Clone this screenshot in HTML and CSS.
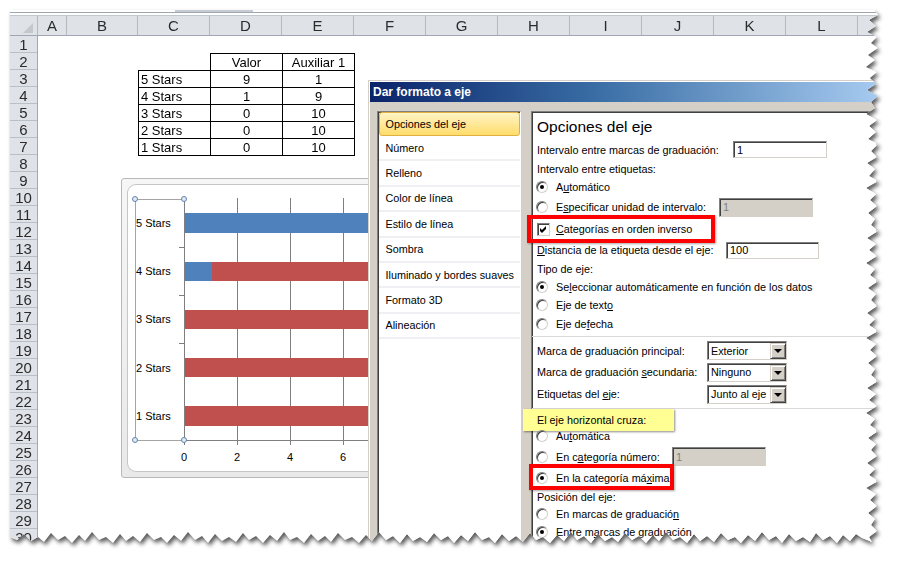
FILE: index.html
```html
<!DOCTYPE html>
<html lang="es">
<head>
<meta charset="utf-8">
<title>Dar formato a eje</title>
<link rel="stylesheet" href="styles.css">
</head>
<body>
<div class="shot-shadow">
  <div class="shot">
    <div class="fbar"><div class="fbar-tab"></div></div>
    <div class="colheads">
      <div class="corner"><span class="corner-tri"></span></div>
      <div class="ch ch-a">A</div>
      <div class="ch ch-b">B</div>
      <div class="ch">C</div>
      <div class="ch">D</div>
      <div class="ch">E</div>
      <div class="ch">F</div>
      <div class="ch">G</div>
      <div class="ch">H</div>
      <div class="ch">I</div>
      <div class="ch">J</div>
      <div class="ch">K</div>
      <div class="ch">L</div>
      <div class="ch ch-m"></div>
    </div>
    <div class="sheet">
      <div class="rowheads">
        <div class="rh">1</div><div class="rh">2</div><div class="rh">3</div><div class="rh">4</div><div class="rh">5</div>
        <div class="rh">6</div><div class="rh">7</div><div class="rh">8</div><div class="rh">9</div><div class="rh">10</div>
        <div class="rh">11</div><div class="rh">12</div><div class="rh">13</div><div class="rh">14</div><div class="rh">15</div>
        <div class="rh">16</div><div class="rh">17</div><div class="rh">18</div><div class="rh">19</div><div class="rh">20</div>
        <div class="rh">21</div><div class="rh">22</div><div class="rh">23</div><div class="rh">24</div><div class="rh">25</div>
        <div class="rh">26</div><div class="rh">27</div><div class="rh">28</div><div class="rh">29</div><div class="rh">30</div>
      </div>
      <div class="cells">
        <table class="data">
          <tr><td class="blank"></td><td>Valor</td><td>Auxiliar 1</td></tr>
          <tr><td class="lbl">5 Stars</td><td>9</td><td>1</td></tr>
          <tr><td class="lbl">4 Stars</td><td>1</td><td>9</td></tr>
          <tr><td class="lbl">3 Stars</td><td>0</td><td>10</td></tr>
          <tr><td class="lbl">2 Stars</td><td>0</td><td>10</td></tr>
          <tr><td class="lbl">1 Stars</td><td>0</td><td>10</td></tr>
        </table>
      </div>
    </div>

    <div class="chart">
      <div class="chart-area">
        <div class="plot">
          <div class="gridline g1"></div>
          <div class="gridline g2"></div>
          <div class="gridline g3"></div>
          <div class="xaxis"><span class="xtick t0"></span><span class="xtick t1"></span><span class="xtick t2"></span><span class="xtick t3"></span></div>
          <div class="yaxis"></div>
          <div class="selbox"></div>
          <div class="cat">
            <span class="cat-lbl">5 Stars</span>
            <div class="bar"><span class="seg blue" style="width:238.5px"></span></div>
          </div>
          <div class="cat">
            <span class="cat-lbl">4 Stars</span>
            <div class="bar"><span class="seg blue" style="width:26.5px"></span><span class="seg red" style="width:238.5px"></span></div>
          </div>
          <div class="cat">
            <span class="cat-lbl">3 Stars</span>
            <div class="bar"><span class="seg red" style="width:265px"></span></div>
          </div>
          <div class="cat">
            <span class="cat-lbl">2 Stars</span>
            <div class="bar"><span class="seg red" style="width:265px"></span></div>
          </div>
          <div class="cat">
            <span class="cat-lbl">1 Stars</span>
            <div class="bar"><span class="seg red" style="width:265px"></span></div>
          </div>
          <span class="handle h-tl"></span>
          <span class="handle h-tr"></span>
          <span class="handle h-bl"></span>
          <span class="handle h-br"></span>
        </div>
        <div class="xlabels">
          <span>0</span><span>2</span><span>4</span><span>6</span>
        </div>
      </div>
      <span class="grip grip-tl"></span>
      <span class="grip grip-ml"></span>
      <span class="grip grip-bl"></span>
      <span class="grip grip-tr"></span>
      <span class="grip grip-br"></span>
    </div>

    <div class="dialog">
      <div class="titlebar">Dar formato a eje</div>
      <div class="dlg-body">
        <div class="list">
          <div class="item sel">Opciones del eje</div>
          <div class="item">Número</div>
          <div class="item">Relleno</div>
          <div class="item">Color de línea</div>
          <div class="item">Estilo de línea</div>
          <div class="item">Sombra</div>
          <div class="item">Iluminado y bordes suaves</div>
          <div class="item">Formato 3D</div>
          <div class="item">Alineación</div>
        </div>
        <div class="panel">
          <div class="r r-title">Opciones del eje</div>
          <div class="r h21"><span class="lw196">Intervalo entre marcas de graduación:</span><span class="inp w94">1</span></div>
          <div class="r h18">Intervalo entre etiquetas:</div>
          <div class="r h18"><span class="rad on"></span>A<u>u</u>tomático</div>
          <div class="r h22"><span class="rad"></span><span class="lw163">E<u>s</u>pecificar unidad de intervalo:</span><span class="inp dis w94">1</span></div>
          <div class="r h22"><span class="chk"><svg width="11" height="11" viewBox="0 0 11 11"><polygon points="2,4 4,6 8,2 8,5 4,9 2,7" fill="#000"/></svg></span><u>C</u>ategorías en orden inverso</div>
          <div class="r h20"><span class="lw189"><u>D</u>istancia de la etiqueta desde el eje:</span><span class="inp w93">100</span></div>
          <div class="r h18">Tipo de eje:</div>
          <div class="r h18"><span class="rad on"></span>Se<u>l</u>eccionar automáticamente en función de los datos</div>
          <div class="r h18"><span class="rad"></span>Eje de text<u>o</u></div>
          <div class="r h19"><span class="rad"></span>Eje de <u>f</u>echa</div>
          <div class="sep"></div>
          <div class="r h21"><span class="lw170">Marca de <u>g</u>raduación principal:</span><span class="dd">Exterior<span class="dd-btn"></span></span></div>
          <div class="r h22"><span class="lw170">Marca de graduación <u>s</u>ecundaria:</span><span class="dd">Ninguno<span class="dd-btn"></span></span></div>
          <div class="r h22"><span class="lw170">Etiquetas del <u>e</u>je:</span><span class="dd">Junto al eje<span class="dd-btn"></span></span></div>
          <div class="sep sep2"></div>
          <div class="r h22"><span class="hl">El eje horizontal cruza:</span></div>
          <div class="r h15b"><span class="rad"></span>Au<u>t</u>omática</div>
          <div class="r h21"><span class="rad"></span><span class="lw116">En c<u>a</u>tegoría número:</span><span class="inp dis w94">1</span></div>
          <div class="r h21"><span class="rad on"></span>En la categoría má<u>x</u>ima</div>
          <div class="r h17">Posición del eje:</div>
          <div class="r h17"><span class="rad"></span>En marcas de graduació<u>n</u></div>
          <div class="r h20"><span class="rad on"></span>Entre m<u>a</u>rcas de graduación</div>
        </div>
      </div>
    </div>

    <div class="redbox rb1"></div>
    <div class="redbox rb2"></div>
  </div>
</div>
</body>
</html>
```
FILE: styles.css
```css
* { box-sizing: border-box; }
html, body { margin: 0; padding: 0; background: #ffffff; }
body {
  width: 897px;
  height: 562px;
  overflow: hidden;
  font-family: "Liberation Sans", Arial, sans-serif;
  color: #000;
}

.shot-shadow {
  padding: 10px 0 0 10px;
  filter: drop-shadow(2px 3px 2px rgba(0, 0, 0, 0.65));
}

.shot {
  position: relative;
  width: 870px;
  height: 540px;
  background: #ffffff;
  display: flex;
  flex-direction: column;
  overflow: hidden;
  clip-path: polygon(0 0, 864px 0, 868px 5px, 859px 10px, 866px 16px, 857px 22px, 867px 27px, 861px 33px, 868px 38px, 858px 45px, 865px 50px, 856px 57px, 867px 62px, 860px 68px, 866px 74px, 857px 80px, 868px 86px, 861px 92px, 865px 98px, 856px 104px, 867px 110px, 859px 116px, 866px 122px, 858px 129px, 868px 134px, 861px 141px, 867px 147px, 857px 153px, 865px 159px, 859px 166px, 868px 171px, 856px 178px, 866px 184px, 860px 190px, 867px 196px, 858px 203px, 865px 209px, 861px 215px, 868px 221px, 857px 228px, 866px 234px, 859px 240px, 867px 246px, 856px 253px, 865px 259px, 860px 265px, 868px 271px, 858px 278px, 866px 284px, 861px 290px, 867px 296px, 857px 303px, 865px 309px, 859px 315px, 868px 321px, 856px 328px, 866px 334px, 860px 340px, 867px 346px, 858px 353px, 865px 359px, 861px 365px, 868px 371px, 857px 378px, 866px 384px, 859px 390px, 867px 396px, 856px 403px, 865px 409px, 860px 415px, 868px 421px, 858px 428px, 866px 434px, 861px 440px, 867px 446px, 857px 453px, 865px 459px, 859px 465px, 868px 471px, 856px 478px, 866px 484px, 860px 490px, 867px 496px, 858px 503px, 865px 509px, 861px 515px, 867px 521px, 859px 527px, 862px 532px,
    852px 528px, 846px 524px, 840px 531px, 833px 525px, 827px 533px, 820px 526px, 813px 530px, 806px 523px, 800px 532px, 793px 527px, 786px 531px, 779px 524px, 772px 533px, 766px 526px, 759px 530px, 752px 522px, 745px 531px, 738px 525px, 731px 533px, 725px 527px, 718px 530px, 711px 523px, 704px 532px, 697px 526px, 690px 531px, 684px 524px, 677px 533px, 670px 527px, 663px 530px, 656px 522px, 649px 531px, 643px 525px, 636px 533px, 629px 526px, 622px 530px, 615px 523px, 608px 532px, 602px 527px, 595px 531px, 588px 524px, 581px 533px, 574px 526px, 567px 530px, 561px 522px, 554px 531px, 547px 525px, 540px 533px, 533px 527px, 526px 530px, 520px 523px, 513px 532px, 506px 526px, 499px 531px, 492px 524px, 485px 533px, 479px 527px, 472px 530px, 465px 522px, 458px 531px, 451px 525px, 444px 533px, 438px 526px, 431px 530px, 424px 523px, 417px 532px, 410px 527px, 403px 531px, 397px 524px, 390px 533px, 383px 526px, 376px 530px, 369px 522px, 362px 531px, 356px 525px, 349px 533px, 342px 527px, 335px 530px, 328px 523px, 321px 532px, 315px 526px, 308px 531px, 301px 524px, 294px 533px, 287px 527px, 280px 530px, 274px 522px, 267px 531px, 260px 525px, 253px 533px, 246px 526px, 239px 530px, 233px 523px, 226px 532px, 219px 527px, 212px 531px, 205px 524px, 198px 533px, 192px 526px, 185px 530px, 178px 522px, 171px 531px, 164px 525px, 157px 533px, 151px 527px, 144px 530px, 137px 523px, 130px 532px, 123px 526px, 116px 531px, 110px 524px, 103px 533px, 96px 527px, 89px 530px, 82px 522px, 75px 531px, 69px 525px, 62px 533px, 55px 526px, 48px 530px, 41px 523px, 34px 532px, 28px 527px, 21px 531px, 14px 524px, 7px 530px, 0 527px);
}

/* formula bar remnant */
.fbar {
  flex: none;
  height: 4px;
  margin-top: 2px;
  border-top: 1px solid #9fa6af;
  border-bottom: 1px solid #c2c8cf;
  background: #ffffff;
}
.fbar-tab {
  margin: -3px 0 0 165px;
  width: 78px;
  height: 2px;
  background: #c7ccd3;
}

/* column headers */
.colheads {
  flex: none;
  display: flex;
  height: 20px;
  background: #dfe3e8;
  border-bottom: 1px solid #9ea7b3;
}
.corner {
  width: 28px;
  flex: none;
  border-right: 1px solid #b3b9c1;
  display: flex;
  align-items: flex-end;
  justify-content: flex-end;
  padding: 0 4px 2px 0;
}
.corner-tri {
  width: 0;
  height: 0;
  border-left: 10px solid transparent;
  border-bottom: 10px solid #c3c8cf;
}
.ch {
  width: 72px;
  flex: none;
  border-right: 1px solid #b3b9c1;
  display: flex;
  align-items: center;
  justify-content: center;
  font-size: 15px;
  line-height: 1;
  color: #2b2b2b;
}
.ch-a { width: 29px; }
.ch-b { width: 71px; }
.ch-m { flex: 1; border-right: none; }

/* sheet body */
.sheet {
  flex: 1;
  min-height: 0;
  display: flex;
}
.rowheads {
  width: 28px;
  flex: none;
  background: #dfe3e8;
  border-right: 1px solid #9ea7b3;
}
.rh {
  height: 17px;
  border-bottom: 1px solid #b9bfc7;
  display: flex;
  align-items: center;
  justify-content: center;
  font-size: 15px;
  line-height: 1;
  color: #2b2b2b;
}
.cells {
  flex: 1;
  position: relative;
}
.data {
  margin: 17px 0 0 100px;
  border-collapse: collapse;
  table-layout: fixed;
  width: 217px;
  font-size: 13px;
}
.data tr { height: 17px; }
.data td {
  width: 72px;
  height: 17px;
  padding: 0;
  border: 1px solid #000;
  text-align: center;
  line-height: 15px;
  white-space: nowrap;
}
.data td.lbl { text-align: left; padding-left: 2px; }
.data td.blank { border: none; }

/* chart (floating object over the sheet) */
.chart {
  position: absolute;
  z-index: 0;
  left: 111px;
  top: 168px;
  width: 300px;
  height: 300px;
  border: 1px solid #b8b8b8;
  border-radius: 3px;
  background: linear-gradient(#f6f6f6, #e9e9e9);
  padding: 5px 0 5px 5px;
}
.chart-area {
  height: 100%;
  background: #ffffff;
  border: 1px solid #c6c6c6;
  border-right: none;
  border-radius: 9px 0 0 9px;
  padding: 14px 0 0 7px;
}
.plot {
  position: relative;
  width: 300px;
  height: 241px;
  padding-left: 49px;
  font-size: 11px;
}
.gridline {
  position: absolute;
  top: -1px;
  width: 1px;
  height: 246px;
  background: #7f7f7f;
  z-index: 1;
}
.g1 { left: 102px; }
.g2 { left: 155px; }
.g3 { left: 208px; }
.xaxis {
  position: absolute;
  left: 49px;
  top: 241px;
  width: 260px;
  height: 1px;
  background: #7f7f7f;
  z-index: 1;
}
.xtick {
  position: absolute;
  top: 0;
  width: 1px;
  height: 5px;
  background: #7f7f7f;
}
.t0 { left: 0; }
.t1 { left: 53px; }
.t2 { left: 106px; }
.t3 { left: 159px; }
.yaxis {
  position: absolute;
  left: 49px;
  top: 0;
  width: 1px;
  height: 242px;
  background: #7f7f7f;
  z-index: 3;
}
.yaxis::before {
  content: "";
  position: absolute;
  right: 1px;
  top: 48px;
  width: 5px;
  height: 145px;
  background: repeating-linear-gradient(#7f7f7f 0 1px, transparent 1px 48.2px);
}
.selbox {
  position: absolute;
  left: 0;
  top: 0;
  width: 50px;
  height: 242px;
  border: 1px solid #a4a4a4;
  border-right: none;
  z-index: 1;
}
.cat {
  position: relative;
  z-index: 2;
  height: 48.2px;
  display: flex;
  align-items: center;
}
.cat-lbl {
  position: absolute;
  left: -48px;
  top: 50%;
  transform: translateY(-50%);
  white-space: nowrap;
}
.bar {
  display: flex;
  height: 19.5px;
  margin-left: 1px;
}
.seg { display: block; height: 100%; }
.seg.blue { background: #4f81bd; }
.seg.red { background: #c0504d; }
.handle {
  position: absolute;
  z-index: 4;
  width: 6px;
  height: 6px;
  border-radius: 50%;
  border: 1px solid #5f83b1;
  background: #e3eaf3;
}
.h-tl { left: -3px; top: -3px; }
.h-tr { left: 46px; top: -3px; }
.h-bl { left: -3px; top: 238px; }
.h-br { left: 46px; top: 238px; }
.xlabels {
  display: flex;
  margin: 11px 0 0 43px;
  font-size: 11px;
}
.xlabels span {
  width: 53px;
  text-align: left;
  padding-left: 3px;
}
.grip {
  position: absolute;
  width: 3px;
  height: 3px;
  background: radial-gradient(circle, #9c9c9c 0 0.6px, transparent 0.7px) 0 0 / 2px 2px;
}
.grip-tl { left: 0; top: 1px; }
.grip-bl { left: 0; bottom: 1px; }
.grip-ml { left: 0; top: 143px; height: 14px; }
.grip-tr { left: 239px; top: 1px; width: 6px; }
.grip-br { left: 239px; bottom: 1px; width: 6px; }

/* dialog */
.dialog {
  position: absolute;
  z-index: 1;
  left: 358px;
  top: 70px;
  width: 510px;
  height: 480px;
  background: #d4d0c8;
  border: 1px solid #d4d0c8;
  box-shadow: inset 1px 1px 0 #ffffff;
  padding: 1px 0 0 1px;
}
.titlebar {
  height: 20px;
  background: linear-gradient(90deg, #0a246a 0%, #3a6ea5 45%, #a6caf0 100%);
  color: #ffffff;
  font-weight: bold;
  font-size: 12px;
  display: flex;
  align-items: center;
  padding-left: 3px;
  white-space: nowrap;
}
.dlg-body {
  display: flex;
  gap: 10px;
  padding: 9px 0 0 7px;
}
.list {
  width: 144px;
  height: 450px;
  flex: none;
  background: #ffffff;
  border: 1px solid;
  border-color: #808080 #ffffff #ffffff #808080;
  box-shadow: inset 1px 1px 0 #404040;
  padding: 0 0 0 1px;
}
.item {
  height: 25.4px;
  border-bottom: 2px solid #eef0f4;
  display: flex;
  align-items: center;
  padding-left: 6.5px;
  font-size: 10.8px;
  white-space: nowrap;
}
.item.sel {
  height: 24px;
  border: 1px solid #e0b040;
  border-radius: 3px;
  background: linear-gradient(#fff4c4, #ffdc6c);
  padding-left: 5.5px;
}
.panel {
  flex: none;
  width: 345px;
  height: 450px;
  background: #ffffff;
  border-top: 1px solid #808080;
  border-left: 1px solid #808080;
  box-shadow: inset 1px 1px 0 #404040;
  padding: 1px 0 0 5px;
  font-size: 10.8px;
}
.r {
  display: flex;
  align-items: center;
  white-space: nowrap;
}
.r-title { height: 26px; padding-top: 2px; font-size: 15.5px; }
.h15b { height: 15px; padding-bottom: 5px; }
.h17 { height: 17px; }
.h18 { height: 18px; }
.h19 { height: 19px; }
.h20 { height: 20px; }
.h21 { height: 21px; }
.h22 { height: 22px; }

.lw196 { width: 196px; flex: none; }
.lw189 { width: 189px; flex: none; }
.lw170 { width: 170px; flex: none; }
.lw163 { width: 163px; flex: none; }
.lw116 { width: 116px; flex: none; }

.sep {
  height: 0;
  border-top: 1px solid #d9d9d9;
  margin: 3px 0 3px -5px;
}
.sep2 { margin: 3px 0 0 -5px; }

.rad {
  width: 12px;
  height: 12px;
  flex: none;
  border-radius: 50%;
  border: 1px solid;
  border-color: #808080 #d4d0c8 #d4d0c8 #808080;
  background: #ffffff;
  box-shadow: inset 1px 1px 0 #404040;
  position: relative;
  margin: 0 8px 0 -1px;
}
.rad.on::after {
  content: "";
  position: absolute;
  left: 3px;
  top: 3px;
  width: 4px;
  height: 4px;
  border-radius: 50%;
  background: #000;
}
.chk {
  width: 13px;
  height: 13px;
  flex: none;
  border: 1px solid;
  border-color: #808080 #d4d0c8 #d4d0c8 #808080;
  box-shadow: inset 1px 1px 0 #404040;
  background: #ffffff;
  margin-right: 6px;
  display: flex;
}
.inp {
  height: 17px;
  flex: none;
  border: 1px solid;
  border-color: #808080 #d4d0c8 #d4d0c8 #808080;
  box-shadow: inset 1px 1px 0 #404040;
  background: #ffffff;
  padding-left: 3px;
  display: flex;
  align-items: center;
  font-size: 11px;
}
.inp.dis { background: #d4d0c8; color: #808080; height: 19px; }
.w94 { width: 94px; }
.w93 { width: 93px; }

.dd {
  width: 80px;
  height: 19px;
  flex: none;
  border: 1px solid;
  border-color: #808080 #d4d0c8 #d4d0c8 #808080;
  box-shadow: inset 1px 1px 0 #404040;
  background: #ffffff;
  padding-left: 3px;
  display: flex;
  align-items: center;
}
.dd-btn {
  margin-left: auto;
  width: 16px;
  height: 16px;
  margin-top: 1px;
  background: #d4d0c8;
  border: 1px solid;
  border-color: #d4d0c8 #404040 #404040 #d4d0c8;
  box-shadow: inset 1px 1px 0 #ffffff, inset -1px -1px 0 #808080;
  display: flex;
  align-items: center;
  justify-content: center;
}
.dd-btn::after {
  content: "";
  width: 0;
  height: 0;
  border-left: 4px solid transparent;
  border-right: 4px solid transparent;
  border-top: 4px solid #000;
}

.hl {
  margin-left: -14px;
  width: 151px;
  height: 22px;
  padding-left: 14px;
  background: #ffff94;
  box-shadow: 1px 1px 2px rgba(0, 0, 0, 0.45);
  display: flex;
  align-items: center;
}

/* annotation frames */
.redbox {
  position: absolute;
  z-index: 2;
  border: 4px solid #ff0000;
  box-shadow: 1px 1px 2px rgba(0, 0, 0, 0.35);
}
.rb1 { left: 517px; top: 205px; width: 188px; height: 28px; }
.rb2 { left: 519px; top: 454px; width: 145px; height: 26px; }
```
